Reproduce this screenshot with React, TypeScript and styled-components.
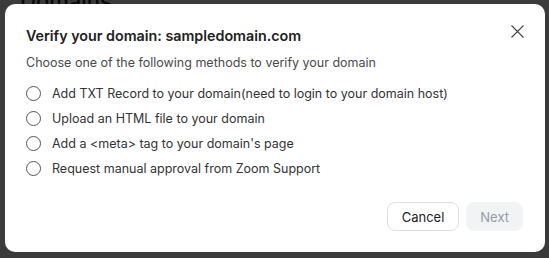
import styled, { createGlobalStyle } from 'styled-components';

const GlobalStyle = createGlobalStyle`
  html, body {
    margin: 0;
    padding: 0;
    background: #3b3b3b;
    font-family: Inter, "Noto Sans", sans-serif;
  }
`;

const Backdrop = styled.div`
  position: relative;
  width: 549px;
  height: 258px;
  overflow: hidden;
  background: #f4f5f7;
`;

const PageBehind = styled.div`
  padding: 0 0 0 20px;
  h1 {
    margin: -12px 0 0;
    font-size: 22px;
    font-weight: 500;
    color: #222;
  }
`;

const Overlay = styled.div`
  position: absolute;
  inset: 0;
  background: rgba(0, 0, 0, 0.76);
  padding: 4px 4px 6px 5px;
  box-sizing: border-box;
`;

const Dialog = styled.div`
  position: relative;
  width: 540px;
  height: 248px;
  box-sizing: border-box;
  background: #fff;
  border-radius: 10px;
  padding: 21px 22px 20px 21px;
  display: flex;
  flex-direction: column;
`;

const Title = styled.h2`
  margin: 0;
  font-size: 14.3px;
  line-height: 22px;
  font-weight: 600;
  color: #222;
`;

const Subtitle = styled.p`
  margin: 6px 0 8px;
  font-size: 12.5px;
  line-height: 20px;
  color: #4a4a4a;
`;

const CloseButton = styled.button`
  position: absolute;
  top: 15px;
  right: 16px;
  width: 24px;
  height: 24px;
  padding: 0;
  border: none;
  background: transparent;
  display: flex;
  align-items: center;
  justify-content: center;
  cursor: pointer;
`;

const Options = styled.div`
  display: flex;
  flex-direction: column;
`;

const Option = styled.label`
  display: flex;
  align-items: center;
  gap: 11px;
  height: 25px;
  font-size: 12.5px;
  color: #333;
  cursor: pointer;
`;

const Radio = styled.span`
  width: 15px;
  height: 15px;
  border: 1.3px solid #555;
  border-radius: 50%;
  box-sizing: border-box;
  flex-shrink: 0;
`;

const Footer = styled.div`
  margin-top: auto;
  display: flex;
  justify-content: flex-end;
  gap: 7px;
  padding-bottom: 1px;
`;

const Button = styled.button<{ $disabled?: boolean }>`
  height: 29px;
  padding: 0 ${(p) => (p.$disabled ? '13px' : '14px')};
  border-radius: 8px;
  font-family: Inter, "Noto Sans", sans-serif;
  font-size: 13px;
  border: 1px solid ${(p) => (p.$disabled ? '#f1f3f5' : '#dcdfe4')};
  background: ${(p) => (p.$disabled ? '#f1f3f5' : '#fff')};
  color: ${(p) => (p.$disabled ? '#939ca7' : '#222')};
`;

const methods = [
  'Add TXT Record to your domain(need to login to your domain host)',
  'Upload an HTML file to your domain',
  "Add a <meta> tag to your domain's page",
  'Request manual approval from Zoom Support',
];

const App = () => {
  return (
    <Backdrop>
      <GlobalStyle />
      <PageBehind>
        <h1>Domains</h1>
      </PageBehind>
      <Overlay>
        <Dialog>
          <Title>Verify your domain: sampledomain.com</Title>
          <CloseButton aria-label="Close">
            <svg width="13" height="13" viewBox="0 0 13 13">
              <path d="M0.5 0.5L12.5 12.5M12.5 0.5L0.5 12.5" stroke="#444" strokeWidth="1.1" fill="none" />
            </svg>
          </CloseButton>
          <Subtitle>Choose one of the following methods to verify your domain</Subtitle>
          <Options>
            {methods.map((m) => (
              <Option key={m}>
                <Radio />
                {m}
              </Option>
            ))}
          </Options>
          <Footer>
            <Button>Cancel</Button>
            <Button $disabled>Next</Button>
          </Footer>
        </Dialog>
      </Overlay>
    </Backdrop>
  );
};

export default App;
